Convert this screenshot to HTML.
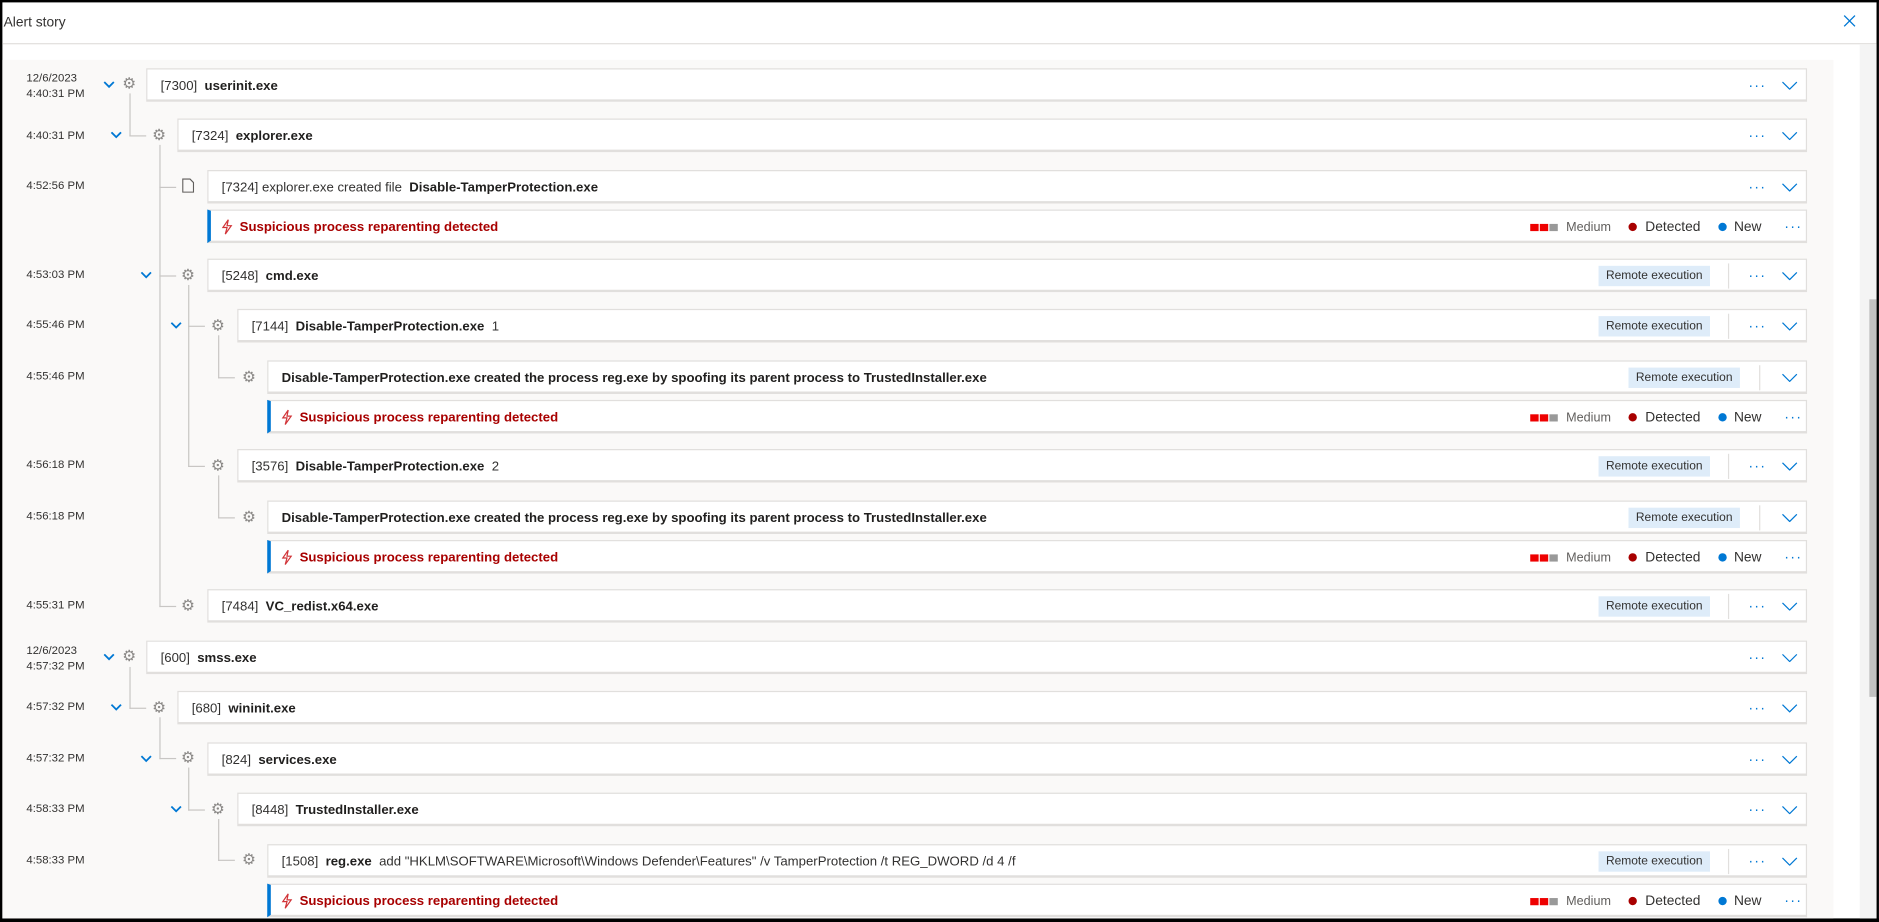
<!DOCTYPE html>
<html><head><meta charset="utf-8">
<style>
html,body{margin:0;padding:0;width:1879px;height:922px;overflow:hidden;background:#000}
#w{position:absolute;left:0;top:0;width:1568px;height:770px;transform:scale(1.1983,1.1974);transform-origin:0 0;background:#fff;font-family:"Liberation Sans",sans-serif;color:#323130}
.a{position:absolute}
.c{position:absolute;height:28px;right:60px;background:#fff;border:1px solid #e1dfdd;border-bottom:2px solid #e1dfdd;box-sizing:border-box;font-size:11px;line-height:28px;padding-left:11px;white-space:nowrap}
.c b{color:#201f1e}
.t{position:absolute;left:22px;font-size:9.5px;color:#323130;line-height:13px}
.chv{position:absolute;width:10px;height:6px}
.g{position:absolute;font-size:13px;color:#8a8886;line-height:13px}
.vl{position:absolute;width:1px;background:#c8c6c4}
.hl{position:absolute;height:1px;background:#c8c6c4}
.dots{position:absolute;right:33px;top:0;color:#0078d4;font-size:12px;letter-spacing:1px;line-height:26px}
.ch{position:absolute;right:7px;top:10px}
.bd{position:absolute;top:5px;height:17px;line-height:17px;width:93px;text-align:center;background:#deecf9;font-size:10px;color:#323130}
.dv{position:absolute;top:3px;width:1px;height:21px;background:#e1dfdd}
.al{border-left:3px solid #0078d4;padding-left:9px;color:#a80000;font-weight:bold}
.al .bolt{display:inline-block;vertical-align:-3px;margin-right:6px}
.ar{position:absolute;left:1052px;top:0;font-size:10.5px;font-weight:normal;color:#323130}
.sq{position:absolute;top:11px;width:7px;height:6px}
</style></head><body><div id="w">
<div class="a" style="left:0;top:0;width:1568px;height:2px;background:#000"></div>
<div class="a" style="left:0;top:0;width:2px;height:770px;background:#000"></div>
<div class="a" style="right:0;top:0;width:2px;height:770px;background:#000"></div>
<div class="a" style="left:0;bottom:0;width:1568px;height:3px;background:#000"></div>
<div class="a" style="left:3px;top:13px;font-size:11.5px;color:#323130">Alert story</div>
<svg class="a" style="left:1538px;top:12px" width="11" height="11" viewBox="0 0 11 11"><path d="M1 1L10 10M10 1L1 10" stroke="#0078d4" stroke-width="1.1"/></svg>
<div class="a" style="left:2px;top:36px;width:1564px;height:1px;background:#e1dfdd"></div>
<div class="a" style="left:2px;top:50px;width:1528px;height:717px;background:#faf9f8"></div>
<div class="a" style="left:1552px;top:37px;width:14px;height:730px;background:#f4f4f4"></div>
<div class="a" style="left:1560px;top:250px;width:6px;height:332px;background:#c1c1c1"></div>

<div class="t" style="top:59px">12/6/2023<br>4:40:31 PM</div>
<div class="t" style="top:107px">4:40:31 PM</div>
<div class="t" style="top:149px">4:52:56 PM</div>
<div class="t" style="top:223px">4:53:03 PM</div>
<div class="t" style="top:265px">4:55:46 PM</div>
<div class="t" style="top:308px">4:55:46 PM</div>
<div class="t" style="top:382px">4:56:18 PM</div>
<div class="t" style="top:425px">4:56:18 PM</div>
<div class="t" style="top:499px">4:55:31 PM</div>
<div class="t" style="top:537px">12/6/2023<br>4:57:32 PM</div>
<div class="t" style="top:584px">4:57:32 PM</div>
<div class="t" style="top:627px">4:57:32 PM</div>
<div class="t" style="top:669px">4:58:33 PM</div>
<div class="t" style="top:712px">4:58:33 PM</div>

<svg class="chv" style="left:86px;top:68px" viewBox="0 0 10 6"><path d="M1 .5L5 4.5 9 .5" fill="none" stroke="#0078d4" stroke-width="1.5"/></svg>
<svg class="chv" style="left:92px;top:110px" viewBox="0 0 10 6"><path d="M1 .5L5 4.5 9 .5" fill="none" stroke="#0078d4" stroke-width="1.5"/></svg>
<svg class="chv" style="left:117px;top:227px" viewBox="0 0 10 6"><path d="M1 .5L5 4.5 9 .5" fill="none" stroke="#0078d4" stroke-width="1.5"/></svg>
<svg class="chv" style="left:142px;top:269px" viewBox="0 0 10 6"><path d="M1 .5L5 4.5 9 .5" fill="none" stroke="#0078d4" stroke-width="1.5"/></svg>
<svg class="chv" style="left:86px;top:546px" viewBox="0 0 10 6"><path d="M1 .5L5 4.5 9 .5" fill="none" stroke="#0078d4" stroke-width="1.5"/></svg>
<svg class="chv" style="left:92px;top:588px" viewBox="0 0 10 6"><path d="M1 .5L5 4.5 9 .5" fill="none" stroke="#0078d4" stroke-width="1.5"/></svg>
<svg class="chv" style="left:117px;top:631px" viewBox="0 0 10 6"><path d="M1 .5L5 4.5 9 .5" fill="none" stroke="#0078d4" stroke-width="1.5"/></svg>
<svg class="chv" style="left:142px;top:673px" viewBox="0 0 10 6"><path d="M1 .5L5 4.5 9 .5" fill="none" stroke="#0078d4" stroke-width="1.5"/></svg>

<div class="g" style="left:102px;top:63px">⚙</div>
<div class="g" style="left:127px;top:106px">⚙</div>
<div class="g" style="left:151px;top:223px">⚙</div>
<div class="g" style="left:176px;top:265px">⚙</div>
<div class="g" style="left:202px;top:308px">⚙</div>
<div class="g" style="left:176px;top:382px">⚙</div>
<div class="g" style="left:202px;top:425px">⚙</div>
<div class="g" style="left:151px;top:499px">⚙</div>
<div class="g" style="left:102px;top:541px">⚙</div>
<div class="g" style="left:127px;top:584px">⚙</div>
<div class="g" style="left:151px;top:626px">⚙</div>
<div class="g" style="left:176px;top:669px">⚙</div>
<div class="g" style="left:202px;top:711px">⚙</div>
<svg class="a" style="left:152px;top:149px" width="10" height="12" viewBox="0 0 10 12"><path d="M.5 .5H6.5L9.5 3.5V11.5H.5Z" fill="none" stroke="#605e5c"/></svg>

<div class="vl" style="left:108px;top:78px;height:36px"></div><div class="hl" style="left:108px;top:113px;width:14px"></div>
<div class="vl" style="left:133px;top:121px;height:386px"></div>
<div class="hl" style="left:133px;top:156px;width:14px"></div>
<div class="hl" style="left:133px;top:230px;width:14px"></div>
<div class="hl" style="left:133px;top:506px;width:14px"></div>
<div class="vl" style="left:157px;top:238px;height:152px"></div>
<div class="hl" style="left:157px;top:272px;width:14px"></div>
<div class="hl" style="left:157px;top:389px;width:14px"></div>
<div class="vl" style="left:182px;top:280px;height:36px"></div><div class="hl" style="left:182px;top:315px;width:14px"></div>
<div class="vl" style="left:182px;top:397px;height:36px"></div><div class="hl" style="left:182px;top:432px;width:14px"></div>
<div class="vl" style="left:108px;top:557px;height:35px"></div><div class="hl" style="left:108px;top:591px;width:14px"></div>
<div class="vl" style="left:133px;top:599px;height:35px"></div><div class="hl" style="left:133px;top:633px;width:14px"></div>
<div class="vl" style="left:157px;top:641px;height:36px"></div><div class="hl" style="left:157px;top:676px;width:14px"></div>
<div class="vl" style="left:182px;top:684px;height:35px"></div><div class="hl" style="left:182px;top:718px;width:14px"></div>

<div class="c" style="left:122px;top:57px">[7300]&nbsp; <b>userinit.exe</b><span class="dots">···</span><svg class="ch" width="13" height="7" viewBox="0 0 13 7"><path d="M.5 .5L6.5 6.5 12.5 .5" fill="none" stroke="#0078d4"/></svg></div>
<div class="c" style="left:148px;top:99px">[7324]&nbsp; <b>explorer.exe</b><span class="dots">···</span><svg class="ch" width="13" height="7" viewBox="0 0 13 7"><path d="M.5 .5L6.5 6.5 12.5 .5" fill="none" stroke="#0078d4"/></svg></div>
<div class="c" style="left:173px;top:142px">[7324] explorer.exe created file&nbsp; <b>Disable-TamperProtection.exe</b><span class="dots">···</span><svg class="ch" width="13" height="7" viewBox="0 0 13 7"><path d="M.5 .5L6.5 6.5 12.5 .5" fill="none" stroke="#0078d4"/></svg></div>
<div class="c al" style="left:173px;top:175px"><svg class="bolt" width="9" height="13" viewBox="0 0 9 13"><path d="M5.5 .5L1 7H4.5L3 12.5 8 5.5H4.5Z" fill="none" stroke="#d13438"/></svg>Suspicious process reparenting detected<div class="ar" style="left:1101px"><span class="sq" style="left:0;background:#e00"></span><span class="sq" style="left:8px;background:#e00"></span><span class="sq" style="left:16px;background:#999"></span><span class="a" style="left:30px;color:#605e5c">Medium</span><span class="a" style="left:82px;top:10px;width:7px;height:7px;border-radius:50%;background:#a80000"></span><span class="a" style="left:96px;font-size:11.5px">Detected</span><span class="a" style="left:157px;top:10px;width:7px;height:7px;border-radius:50%;background:#0078d4"></span><span class="a" style="left:170px;font-size:11.5px">New</span><span class="a" style="left:212px;color:#0078d4;font-size:12px;letter-spacing:1px;line-height:26px">···</span></div></div>
<div class="c" style="left:173px;top:216px">[5248]&nbsp; <b>cmd.exe</b><span class="bd" style="right:80px">Remote execution</span><span class="dv" style="right:64px"></span><span class="dots">···</span><svg class="ch" width="13" height="7" viewBox="0 0 13 7"><path d="M.5 .5L6.5 6.5 12.5 .5" fill="none" stroke="#0078d4"/></svg></div>
<div class="c" style="left:198px;top:258px">[7144]&nbsp; <b>Disable-TamperProtection.exe</b>&nbsp; 1<span class="bd" style="right:80px">Remote execution</span><span class="dv" style="right:64px"></span><span class="dots">···</span><svg class="ch" width="13" height="7" viewBox="0 0 13 7"><path d="M.5 .5L6.5 6.5 12.5 .5" fill="none" stroke="#0078d4"/></svg></div>
<div class="c" style="left:223px;top:301px"><b>Disable-TamperProtection.exe created the process reg.exe by spoofing its parent process to TrustedInstaller.exe</b><span class="bd" style="right:55px">Remote execution</span><span class="dv" style="right:38px"></span><svg class="ch" width="13" height="7" viewBox="0 0 13 7"><path d="M.5 .5L6.5 6.5 12.5 .5" fill="none" stroke="#0078d4"/></svg></div>
<div class="c al" style="left:223px;top:334px"><svg class="bolt" width="9" height="13" viewBox="0 0 9 13"><path d="M5.5 .5L1 7H4.5L3 12.5 8 5.5H4.5Z" fill="none" stroke="#d13438"/></svg>Suspicious process reparenting detected<div class="ar" style="left:1051px"><span class="sq" style="left:0;background:#e00"></span><span class="sq" style="left:8px;background:#e00"></span><span class="sq" style="left:16px;background:#999"></span><span class="a" style="left:30px;color:#605e5c">Medium</span><span class="a" style="left:82px;top:10px;width:7px;height:7px;border-radius:50%;background:#a80000"></span><span class="a" style="left:96px;font-size:11.5px">Detected</span><span class="a" style="left:157px;top:10px;width:7px;height:7px;border-radius:50%;background:#0078d4"></span><span class="a" style="left:170px;font-size:11.5px">New</span><span class="a" style="left:212px;color:#0078d4;font-size:12px;letter-spacing:1px;line-height:26px">···</span></div></div>
<div class="c" style="left:198px;top:375px">[3576]&nbsp; <b>Disable-TamperProtection.exe</b>&nbsp; 2<span class="bd" style="right:80px">Remote execution</span><span class="dv" style="right:64px"></span><span class="dots">···</span><svg class="ch" width="13" height="7" viewBox="0 0 13 7"><path d="M.5 .5L6.5 6.5 12.5 .5" fill="none" stroke="#0078d4"/></svg></div>
<div class="c" style="left:223px;top:418px"><b>Disable-TamperProtection.exe created the process reg.exe by spoofing its parent process to TrustedInstaller.exe</b><span class="bd" style="right:55px">Remote execution</span><span class="dv" style="right:38px"></span><svg class="ch" width="13" height="7" viewBox="0 0 13 7"><path d="M.5 .5L6.5 6.5 12.5 .5" fill="none" stroke="#0078d4"/></svg></div>
<div class="c al" style="left:223px;top:451px"><svg class="bolt" width="9" height="13" viewBox="0 0 9 13"><path d="M5.5 .5L1 7H4.5L3 12.5 8 5.5H4.5Z" fill="none" stroke="#d13438"/></svg>Suspicious process reparenting detected<div class="ar" style="left:1051px"><span class="sq" style="left:0;background:#e00"></span><span class="sq" style="left:8px;background:#e00"></span><span class="sq" style="left:16px;background:#999"></span><span class="a" style="left:30px;color:#605e5c">Medium</span><span class="a" style="left:82px;top:10px;width:7px;height:7px;border-radius:50%;background:#a80000"></span><span class="a" style="left:96px;font-size:11.5px">Detected</span><span class="a" style="left:157px;top:10px;width:7px;height:7px;border-radius:50%;background:#0078d4"></span><span class="a" style="left:170px;font-size:11.5px">New</span><span class="a" style="left:212px;color:#0078d4;font-size:12px;letter-spacing:1px;line-height:26px">···</span></div></div>
<div class="c" style="left:173px;top:492px">[7484]&nbsp; <b>VC_redist.x64.exe</b><span class="bd" style="right:80px">Remote execution</span><span class="dv" style="right:64px"></span><span class="dots">···</span><svg class="ch" width="13" height="7" viewBox="0 0 13 7"><path d="M.5 .5L6.5 6.5 12.5 .5" fill="none" stroke="#0078d4"/></svg></div>
<div class="c" style="left:122px;top:535px">[600]&nbsp; <b>smss.exe</b><span class="dots">···</span><svg class="ch" width="13" height="7" viewBox="0 0 13 7"><path d="M.5 .5L6.5 6.5 12.5 .5" fill="none" stroke="#0078d4"/></svg></div>
<div class="c" style="left:148px;top:577px">[680]&nbsp; <b>wininit.exe</b><span class="dots">···</span><svg class="ch" width="13" height="7" viewBox="0 0 13 7"><path d="M.5 .5L6.5 6.5 12.5 .5" fill="none" stroke="#0078d4"/></svg></div>
<div class="c" style="left:173px;top:620px">[824]&nbsp; <b>services.exe</b><span class="dots">···</span><svg class="ch" width="13" height="7" viewBox="0 0 13 7"><path d="M.5 .5L6.5 6.5 12.5 .5" fill="none" stroke="#0078d4"/></svg></div>
<div class="c" style="left:198px;top:662px">[8448]&nbsp; <b>TrustedInstaller.exe</b><span class="dots">···</span><svg class="ch" width="13" height="7" viewBox="0 0 13 7"><path d="M.5 .5L6.5 6.5 12.5 .5" fill="none" stroke="#0078d4"/></svg></div>
<div class="c" style="left:223px;top:705px">[1508]&nbsp; <b>reg.exe</b>&nbsp; add "HKLM\SOFTWARE\Microsoft\Windows Defender\Features" /v TamperProtection /t REG_DWORD /d 4 /f<span class="bd" style="right:80px">Remote execution</span><span class="dv" style="right:64px"></span><span class="dots">···</span><svg class="ch" width="13" height="7" viewBox="0 0 13 7"><path d="M.5 .5L6.5 6.5 12.5 .5" fill="none" stroke="#0078d4"/></svg></div>
<div class="c al" style="left:223px;top:738px"><svg class="bolt" width="9" height="13" viewBox="0 0 9 13"><path d="M5.5 .5L1 7H4.5L3 12.5 8 5.5H4.5Z" fill="none" stroke="#d13438"/></svg>Suspicious process reparenting detected<div class="ar" style="left:1051px"><span class="sq" style="left:0;background:#e00"></span><span class="sq" style="left:8px;background:#e00"></span><span class="sq" style="left:16px;background:#999"></span><span class="a" style="left:30px;color:#605e5c">Medium</span><span class="a" style="left:82px;top:10px;width:7px;height:7px;border-radius:50%;background:#a80000"></span><span class="a" style="left:96px;font-size:11.5px">Detected</span><span class="a" style="left:157px;top:10px;width:7px;height:7px;border-radius:50%;background:#0078d4"></span><span class="a" style="left:170px;font-size:11.5px">New</span><span class="a" style="left:212px;color:#0078d4;font-size:12px;letter-spacing:1px;line-height:26px">···</span></div></div>
</div></body></html>
